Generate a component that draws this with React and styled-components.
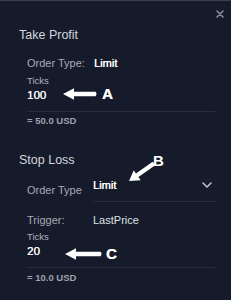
import React from 'react'
import styled, { createGlobalStyle } from 'styled-components'

const Global = createGlobalStyle`
  html, body { margin: 0; padding: 0; background: #151b2b; }
  body { font-family: "Liberation Sans", Arial, sans-serif; }
`

const Panel = styled.div`
  position: relative;
  width: 231px;
  height: 300px;
  box-sizing: border-box;
  background: #151b2b;
  border-top: 1px solid #394052;
  padding: 26px 16px 0 19px;
  display: flex;
  flex-direction: column;
  overflow: hidden;
`

const Close = styled.button`
  position: absolute;
  top: 7px;
  right: 5px;
  width: 12px;
  height: 12px;
  padding: 0;
  border: 0;
  background: none;
  display: flex;
  align-items: center;
  justify-content: center;
  cursor: pointer;
`

const Title = styled.div`
  font-size: 12.5px;
  line-height: 16px;
  color: #d3d6dc;
  margin-top: ${p => p.$top || 0}px;
`

const Body = styled.div`
  display: flex;
  flex-direction: column;
  padding-left: 8px;
  margin-top: ${p => p.$top || 0}px;
`

const Row = styled.div`
  position: relative;
  display: flex;
  align-items: center;
  margin-top: ${p => p.$top || 0}px;
`

const Label = styled.span`
  width: 66px;
  flex: none;
  font-size: 11px;
  line-height: 14px;
  color: #a7abb4;
`

const Value = styled.span`
  font-size: 11px;
  font-weight: 400;
  line-height: 14px;
  color: ${p => (p.$strong ? '#ffffff' : '#dfe2e7')};
  text-shadow: ${p => (p.$strong ? '0.3px 0 0 #ffffff' : 'none')};
  margin-left: ${p => p.$shift || 0}px;
`

const Select = styled.div`
  flex: 1;
  display: flex;
  align-items: center;
  justify-content: space-between;
  padding: 0 3px 9px 0;
  border-bottom: 1px solid #272e3e;
`

const Small = styled.div`
  font-size: 9.5px;
  line-height: 11px;
  color: #b0b4bc;
  margin-top: ${p => p.$top || 0}px;
`

const Ticks = styled.div`
  position: relative;
  font-size: 11.5px;
  line-height: 13px;
  color: #f7f8fa;
  text-shadow: 0.3px 0 0 #f7f8fa;
  margin-top: ${p => p.$top || 0}px;
`

const Divider = styled.div`
  height: 1px;
  background: #262d3d;
  margin-top: ${p => p.$top || 0}px;
`

const Usd = styled.div`
  font-size: 9.5px;
  font-weight: 700;
  line-height: 11px;
  color: #9ca1ab;
  margin-top: ${p => p.$top || 0}px;
`

const Note = styled.div`
  position: absolute;
  left: ${p => p.$left}px;
  top: ${p => p.$top}px;
  display: flex;
  align-items: center;
  gap: ${p => p.$gap || 5}px;
  height: 16px;
`

const Letter = styled.span`
  font-family: "Liberation Sans", Arial, sans-serif;
  font-size: 15px;
  font-weight: 700;
  line-height: 16px;
  color: #ffffff;
`

const DiagNote = styled.div`
  position: absolute;
  left: 100px;
  top: -23px;
  width: 40px;
  height: 28px;
`

const DiagLetter = styled(Letter)`
  position: absolute;
  left: 26px;
  top: -2px;
`

const arrowPath = 'M0 0 L10 -6 L10 -2.2 L30 -2.2 Q32 0 30 2.2 L10 2.2 L10 6 Z'

const LeftArrow = ({ width }) => (
  <svg width={width} height="12" viewBox={`0 0 ${width} 12`}>
    <path d={`M0 6 L11 0.2 L11 3.8 L${width - 1.5} 3.8 Q${width + 0.5} 6 ${width - 1.5} 8.2 L11 8.2 L11 11.8 Z`} fill="#fff" />
  </svg>
)

const DiagArrow = () => (
  <svg width="32" height="28" viewBox="0 0 32 28" style={{ position: 'absolute', left: 0, top: 3 }}>
    <path d={arrowPath} fill="#fff" transform="translate(2 23) rotate(-35)" />
  </svg>
)

const App = () => {
  return (
    <>
      <Global />
      <Panel>
        <Close aria-label="close">
          <svg width="8" height="8" viewBox="0 0 8 8">
            <path d="M1 1 L7 7 M7 1 L1 7" stroke="#8d929c" strokeWidth="1.5" strokeLinecap="round" />
          </svg>
        </Close>

        <Title>Take Profit</Title>
        <Body $top={13}>
          <Row>
            <Label>Order Type:</Label>
            <Value $strong $shift={1}>Limit</Value>
          </Row>
          <Small $top={4.5}>Ticks</Small>
          <Ticks $top={3.5}>
            100
            <Note $left={36} $top={-3}>
              <LeftArrow width={34} />
              <Letter>A</Letter>
            </Note>
          </Ticks>
          <Divider $top={9} />
          <Usd $top={3}>= 50.0 USD</Usd>
        </Body>

        <Title $top={26}>Stop Loss</Title>
        <Body $top={10}>
          <Row>
            <Label>Order Type</Label>
            <Select>
              <Value $strong>Limit</Value>
              <svg width="10" height="6" viewBox="0 0 10 6">
                <path d="M1 1 L5 5 L9 1" stroke="#c3c6cd" strokeWidth="1.5" fill="none" strokeLinecap="round" strokeLinejoin="round" />
              </svg>
            </Select>
            <DiagNote>
              <DiagArrow />
              <DiagLetter>B</DiagLetter>
            </DiagNote>
          </Row>
          <Row $top={11}>
            <Label>Trigger:</Label>
            <Value>LastPrice</Value>
          </Row>
          <Small $top={4}>Ticks</Small>
          <Ticks $top={3}>
            20
            <Note $left={38} $top={1} $gap={4}>
              <LeftArrow width={37} />
              <Letter>C</Letter>
            </Note>
          </Ticks>
          <Divider $top={9} />
          <Usd $top={3.5}>= 10.0 USD</Usd>
        </Body>
      </Panel>
    </>
  )
}

export default App
